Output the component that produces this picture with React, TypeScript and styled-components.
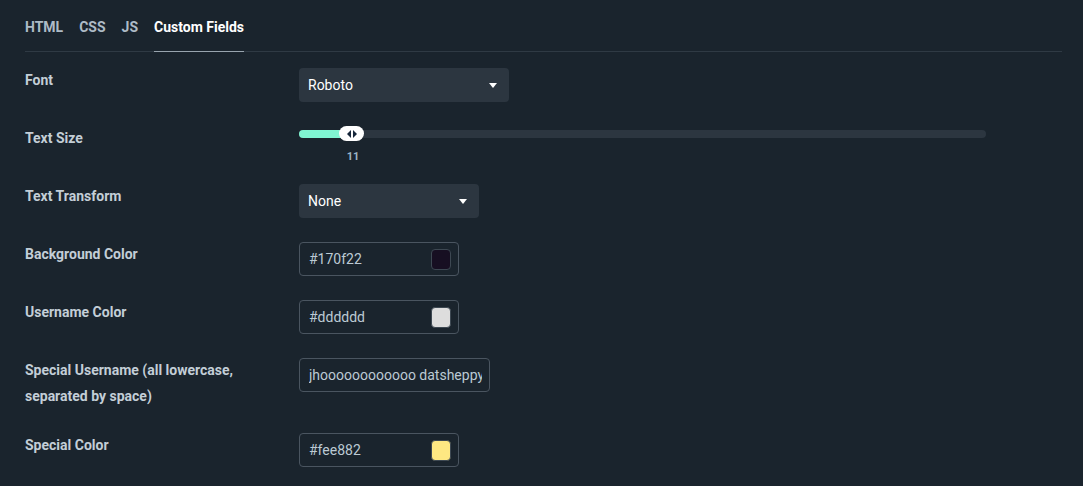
import React from "react";
import styled, { createGlobalStyle } from "styled-components";

const Global = createGlobalStyle`
  html, body { margin: 0; padding: 0; background: #1a242d; }
  body { font-family: Roboto, "Liberation Sans", sans-serif; }
  * { box-sizing: border-box; }
`;

const Page = styled.div`
  width: 1083px;
  min-height: 486px;
  background: #1a242d;
  padding: 0 21px 0 25px;
`;

const TabBar = styled.div`
  display: flex;
  gap: 16px;
  border-bottom: 1px solid #2f3a44;
`;

const Tab = styled.div<{ $active?: boolean }>`
  padding: 18px 0 15px;
  line-height: 18px;
  font-size: 14px;
  font-weight: 700;
  color: ${(p) => (p.$active ? "#ffffff" : "#aebbc6")};
  border-bottom: 1px solid ${(p) => (p.$active ? "#98a4ae" : "transparent")};
  margin-bottom: -1px;
`;

const Form = styled.div`
  padding-top: 16px;
`;

const Row = styled.div`
  display: grid;
  grid-template-columns: 274px 1fr;
  margin-bottom: 24px;
`;

const Label = styled.div`
  margin-top: -1px;
  font-size: 14px;
  font-weight: 700;
  line-height: 26px;
  color: #c3ced7;
`;

const Select = styled.div<{ $w: number }>`
  width: ${(p) => p.$w}px;
  height: 34px;
  background: #2c3640;
  border-radius: 4px;
  display: flex;
  align-items: center;
  justify-content: space-between;
  padding: 0 12px 0 9px;
  font-size: 14px;
  color: #ffffff;
`;

const Caret = styled.span`
  width: 0;
  height: 0;
  border-left: 4px solid transparent;
  border-right: 4px solid transparent;
  border-top: 5px solid #ffffff;
`;

const InputBox = styled.div<{ $w: number }>`
  width: ${(p) => p.$w}px;
  height: 34px;
  border: 1px solid #4a5560;
  border-radius: 4px;
  display: flex;
  align-items: center;
  gap: 6px;
  padding: 0 7px 0 9px;
`;

const Field = styled.input`
  flex: 1;
  min-width: 0;
  border: none;
  outline: none;
  background: transparent;
  padding: 0;
  font-family: Roboto, "Liberation Sans", sans-serif;
  font-size: 14px;
  color: #bccad4;
`;

const Swatch = styled.span<{ $c: string }>`
  width: 20px;
  height: 21px;
  border-radius: 4px;
  background: ${(p) => p.$c};
  border: 1px solid #3d4852;
  flex: none;
`;

const SliderWrap = styled.div`
  width: 90%;
  height: 34px;
  position: relative;
  padding-top: 4px;
`;

const Track = styled.div`
  height: 8px;
  border-radius: 4px;
  background: #2c3640;
  position: relative;
`;

const Fill = styled.div`
  position: absolute;
  left: 0;
  top: 0;
  bottom: 0;
  background: #80f5d2;
  border-radius: 4px 0 0 4px;
`;

const Thumb = styled.div`
  position: absolute;
  top: -4px;
  width: 25px;
  height: 15px;
  margin-left: -13px;
  background: #ffffff;
  border-radius: 8px;
  display: flex;
  align-items: center;
  justify-content: center;
  gap: 2px;
`;

const Arrow = styled.span<{ $dir: "l" | "r" }>`
  width: 0;
  height: 0;
  border-top: 4.5px solid transparent;
  border-bottom: 4.5px solid transparent;
  ${(p) =>
    p.$dir === "l"
      ? "border-right: 4px solid #16263a;"
      : "border-left: 4px solid #16263a;"}
`;

const Value = styled.div`
  position: absolute;
  top: 24px;
  width: 30px;
  margin-left: -15px;
  text-align: center;
  font-size: 11px;
  font-weight: 700;
  line-height: 13px;
  color: #9cb4c6;
`;

const pos = 53;

export default function App() {
  return (
    <Page>
      <Global />
      <TabBar>
        <Tab>HTML</Tab>
        <Tab>CSS</Tab>
        <Tab>JS</Tab>
        <Tab $active>Custom Fields</Tab>
      </TabBar>
      <Form>
        <Row>
          <Label>Font</Label>
          <Select $w={210}>
            Roboto
            <Caret />
          </Select>
        </Row>
        <Row>
          <Label>Text Size</Label>
          <SliderWrap>
            <Track>
              <Fill style={{ width: pos }} />
              <Thumb style={{ left: pos }}>
                <Arrow $dir="l" />
                <Arrow $dir="r" />
              </Thumb>
            </Track>
            <Value style={{ left: pos + 1 }}>11</Value>
          </SliderWrap>
        </Row>
        <Row>
          <Label>Text Transform</Label>
          <Select $w={180}>
            None
            <Caret />
          </Select>
        </Row>
        <Row>
          <Label>Background Color</Label>
          <InputBox $w={160}>
            <Field readOnly value="#170f22" />
            <Swatch $c="#170f22" />
          </InputBox>
        </Row>
        <Row>
          <Label>Username Color</Label>
          <InputBox $w={160}>
            <Field readOnly value="#dddddd" />
            <Swatch $c="#dddddd" />
          </InputBox>
        </Row>
        <Row>
          <Label>
            Special Username (all lowercase,
            <br />
            separated by space)
          </Label>
          <InputBox $w={191}>
            <Field readOnly value="jhoooooooooooo datsheppy" />
          </InputBox>
        </Row>
        <Row>
          <Label>Special Color</Label>
          <InputBox $w={160}>
            <Field readOnly value="#fee882" />
            <Swatch $c="#fee882" />
          </InputBox>
        </Row>
      </Form>
    </Page>
  );
}
